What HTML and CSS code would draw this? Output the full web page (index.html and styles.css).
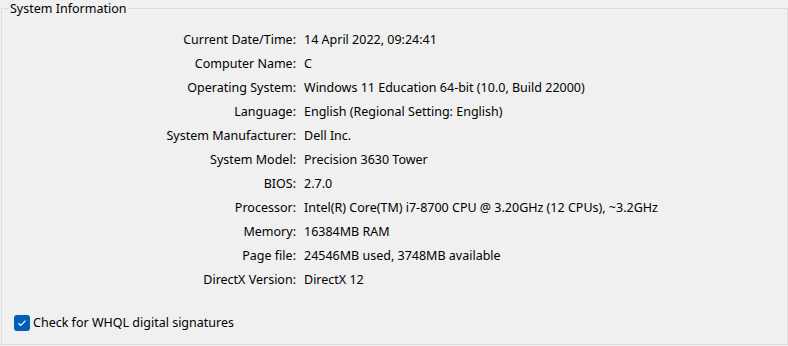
FILE: index.html
```html
<!DOCTYPE html>
<html>
    <head>
        <title>System Information</title>
        <link rel="stylesheet" href="styles.css">
    </head>
    <body>
        <fieldset class="group">
            <legend class="group-title">System Information</legend>
            <div class="info">
                <span class="label">Current Date/Time:</span><span class="value">14 April 2022, 09:24:41</span>
                <span class="label">Computer Name:</span><span class="value">C</span>
                <span class="label">Operating System:</span><span class="value">Windows 11 Education 64-bit (10.0, Build 22000)</span>
                <span class="label">Language:</span><span class="value">English (Regional Setting: English)</span>
                <span class="label">System Manufacturer:</span><span class="value">Dell Inc.</span>
                <span class="label">System Model:</span><span class="value">Precision 3630 Tower</span>
                <span class="label">BIOS:</span><span class="value">2.7.0</span>
                <span class="label">Processor:</span><span class="value">Intel(R) Core(TM) i7-8700 CPU @ 3.20GHz (12 CPUs), ~3.2GHz</span>
                <span class="label">Memory:</span><span class="value">16384MB RAM</span>
                <span class="label">Page file:</span><span class="value">24546MB used, 3748MB available</span>
                <span class="label">DirectX Version:</span><span class="value">DirectX 12</span>
            </div>
            <label class="check">
                <span class="box">
                    <svg width="16" height="16" viewBox="0 0 16 16">
                        <path d="M4.5 8.2 L6.8 10.4 L11.5 5.6" fill="none" stroke="#fff" stroke-width="1.2"/>
                    </svg>
                </span>
                Check for WHQL digital signatures
            </label>
        </fieldset>
    </body>
</html>
```

FILE: styles.css
```css
body {
    background-color: #f0f0f0;
    color: #000;
    font-family: "Noto Sans", sans-serif;
    font-size: 12.5px;
    margin: 0;
    padding: 0;
}

.group {
    border: 1px solid #dcdcdc;
    box-sizing: border-box;
    height: 345px;
    margin: 0 0 0 1px;
    padding: 0;
    width: 787px;
}

.group-title {
    line-height: 17px;
    margin-left: 6px;
    padding: 0 2px;
}

.info {
    column-gap: 8px;
    display: grid;
    grid-template-columns: 294px 1fr;
    line-height: 24px;
    margin-top: 11px;
}

.label {
    text-align: right;
}

.check {
    align-items: center;
    display: flex;
    gap: 3px;
    margin-top: 22px;
    padding-left: 12px;
}

.box {
    background-color: #005fb8;
    border-radius: 3px;
    display: inline-block;
    height: 16px;
    width: 16px;
}

.box svg {
    display: block;
}
```
